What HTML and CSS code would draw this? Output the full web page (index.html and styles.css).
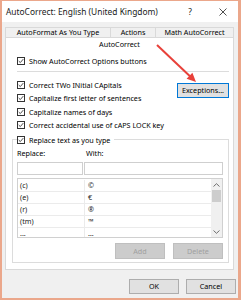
FILE: index.html
```html
<!DOCTYPE html>
<html>
<head>
<meta charset="utf-8">
<link rel="stylesheet" href="styles.css">
</head>
<body>
<div class="window">
  <div class="titlebar">
    <span class="title">AutoCorrect: English (United Kingdom)</span>
    <span class="help">?</span>
    <svg class="close" width="8" height="8" viewBox="0 0 8 8"><path d="M0.5 0.5L7.5 7.5M7.5 0.5L0.5 7.5" stroke="#222" stroke-width="0.8" fill="none"/></svg>
  </div>
  <div class="main">
    <div class="tabs">
      <div class="tab t1">AutoFormat As You Type</div>
      <div class="tab t2">Actions</div>
      <div class="tab t3">Math AutoCorrect</div>
    </div>
    <div class="panel">
      <div class="tab-active">AutoCorrect</div>
      <div class="check show-row"><span class="box"><svg width="6" height="6" viewBox="0 0 6 6"><path d="M0.7 3L2.3 4.6L5.3 1.1" stroke="#222" stroke-width="0.8" fill="none"/></svg></span>Show AutoCorrect Options buttons</div>
      <div class="sep"></div>
      <div class="opts">
        <div class="opt-list">
          <div class="check"><span class="box"><svg width="6" height="6" viewBox="0 0 6 6"><path d="M0.7 3L2.3 4.6L5.3 1.1" stroke="#222" stroke-width="0.8" fill="none"/></svg></span>Correct TWo INitial CApitals</div>
          <div class="check"><span class="box"><svg width="6" height="6" viewBox="0 0 6 6"><path d="M0.7 3L2.3 4.6L5.3 1.1" stroke="#222" stroke-width="0.8" fill="none"/></svg></span>Capitalize first letter of sentences</div>
          <div class="check"><span class="box"><svg width="6" height="6" viewBox="0 0 6 6"><path d="M0.7 3L2.3 4.6L5.3 1.1" stroke="#222" stroke-width="0.8" fill="none"/></svg></span>Capitalize names of days</div>
          <div class="check"><span class="box"><svg width="6" height="6" viewBox="0 0 6 6"><path d="M0.7 3L2.3 4.6L5.3 1.1" stroke="#222" stroke-width="0.8" fill="none"/></svg></span>Correct accidental use of cAPS LOCK key</div>
        </div>
        <button class="btn exceptions">Exceptions...</button>
      </div>
      <div class="group">
        <div class="check legend"><span class="box"><svg width="6" height="6" viewBox="0 0 6 6"><path d="M0.7 3L2.3 4.6L5.3 1.1" stroke="#222" stroke-width="0.8" fill="none"/></svg></span>Replace text as you type</div>
        <div class="labels"><span class="lbl-r">Replace:</span><span>With:</span></div>
        <div class="inputs"><div class="input in-r"></div><div class="input in-w"></div></div>
        <div class="list">
          <div class="rows">
            <div class="row"><span class="c1">(c)</span><span class="c2">©</span></div>
            <div class="row"><span class="c1">(e)</span><span class="c2">€</span></div>
            <div class="row"><span class="c1">(r)</span><span class="c2">®</span></div>
            <div class="row"><span class="c1">(tm)</span><span class="c2">™</span></div>
            <div class="row"><span class="c1">...</span><span class="c2">…</span></div>
          </div>
          <div class="scrollbar">
            <div class="sb-arrow"><svg width="7" height="4" viewBox="0 0 7 4"><path d="M0.5 3.5L3.5 0.7L6.5 3.5" stroke="#606060" stroke-width="0.9" fill="none"/></svg></div>
            <div class="thumb"></div>
            <div class="sb-space"></div>
            <div class="sb-arrow"><svg width="7" height="4" viewBox="0 0 7 4"><path d="M0.5 0.5L3.5 3.3L6.5 0.5" stroke="#606060" stroke-width="0.9" fill="none"/></svg></div>
          </div>
        </div>
        <div class="actions">
          <button class="btn disabled" disabled>Add</button>
          <button class="btn disabled" disabled>Delete</button>
        </div>
      </div>
    </div>
    <div class="footer">
      <button class="btn">OK</button>
      <button class="btn">Cancel</button>
    </div>
  </div>
  <svg class="arrow" width="241" height="300" viewBox="0 0 241 300">
    <path d="M157 45L190.5 76.8" stroke="#e8413a" stroke-width="2" fill="none"/>
    <polygon points="196,82 186.6,78.8 192.4,72.7" fill="#e8413a"/>
  </svg>
</div>
</body>
</html>
```
FILE: styles.css
```css
* { box-sizing: border-box; }
html, body { margin: 0; padding: 0; }
body {
  width: 241px;
  height: 300px;
  overflow: hidden;
  font-family: "Noto Sans", "DejaVu Sans", sans-serif;
  font-size: 7.2px;
  color: #000;
  background: #fff;
}
.window {
  position: relative;
  width: 241px;
  height: 300px;
  border: 2px solid #eba78b;
  border-top-width: 1px;
  border-right-width: 3px;
  background: #f0f0f0;
  display: flex;
  flex-direction: column;
}
.titlebar {
  height: 21px;
  flex: none;
  background: #fff;
  display: flex;
  align-items: center;
  padding: 0 11px 0 4px;
  font-size: 8.4px;
  color: #1a1a1a;
}
.title { flex: 1; }
.help { width: 8px; text-align: center; }
.close { margin-left: 25px; }
.main {
  flex: 1;
  padding: 5px 3px 0 3px;
  display: flex;
  flex-direction: column;
}
.tabs {
  display: flex;
  height: 10px;
  margin-right: 1px;
}
.tab {
  border: 1px solid #d9d9d9;
  border-bottom: none;
  line-height: 9px;
  text-align: center;
  white-space: nowrap;
}
.t1 { width: 106px; }
.t2 { width: 46px; margin-left: -1px; }
.t3 { width: 79px; margin-left: -1px; }
.panel {
  height: 233px;
  margin-right: 1px;
  background: #fff;
  border: 1px solid #d9d9d9;
  padding: 0 4px 0 11px;
  display: flex;
  flex-direction: column;
}
.tab-active {
  height: 12px;
  line-height: 12px;
  text-align: center;
  margin: 0 -4px 0 -11px;
}
.check {
  display: flex;
  align-items: center;
  height: 13.5px;
  gap: 4px;
  white-space: nowrap;
}
.box {
  width: 8px;
  height: 8px;
  border: 1px solid #333;
  background: #fff;
  display: flex;
  flex: none;
}
.show-row { margin-top: 4.25px; }
.sep {
  height: 1px;
  background: #dcdcdc;
  margin: 3.25px 0 5.75px;
}
.opts { display: flex; }
.opt-list { display: flex; flex-direction: column; }
.btn {
  font: inherit;
  color: #000;
  padding: 0;
  background: #e1e1e1;
  border: 1px solid #adadad;
  width: 50px;
  height: 15px;
  line-height: 13px;
}
.exceptions {
  margin-left: auto;
  margin-top: 5.25px;
  width: 52px;
  border-color: #0078d7;
}
.group {
  margin: 7.25px 0 0 -5px;
  border: 1px solid #dcdcdc;
  padding: 0 5px 3px 4px;
  display: flex;
  flex-direction: column;
}
.legend {
  margin-top: -7.25px;
  background: #fff;
  width: fit-content;
  padding-right: 4px;
}
.labels {
  display: flex;
  height: 11px;
  line-height: 11px;
  margin-top: 2px;
}
.lbl-r { width: 69px; }
.inputs {
  display: flex;
  height: 13px;
  margin-top: 2.75px;
}
.input {
  border: 1px solid #cfcfcf;
  background: #fff;
}
.in-r { width: 66px; }
.in-w { flex: 1; margin-left: 1px; }
.list {
  margin-top: 3px;
  height: 60px;
  border: 1px solid #d0d0d0;
  display: flex;
  overflow: hidden;
}
.rows {
  flex: 1;
  padding-top: 1px;
  display: flex;
  flex-direction: column;
}
.row {
  height: 12px;
  flex: none;
  display: flex;
  border-bottom: 1px solid #ebebeb;
  line-height: 11px;
  color: #222;
}
.c1 {
  width: 67px;
  padding-left: 2px;
  border-right: 1px solid #ebebeb;
}
.c2 { padding-left: 3px; }
.scrollbar {
  width: 11px;
  background: #f0f0f0;
  display: flex;
  flex-direction: column;
}
.sb-arrow {
  height: 11px;
  display: flex;
  align-items: center;
  justify-content: center;
}
.thumb {
  height: 12px;
  margin: 0 1px;
  background: #cdcdcd;
}
.sb-space { flex: 1; }
.actions {
  display: flex;
  justify-content: flex-end;
  gap: 8px;
  margin-top: 5px;
}
.actions .btn { height: 16px; line-height: 14px; }
.btn.disabled {
  background: #cccccc;
  border-color: #bfbfbf;
  color: #a0a0a0;
}
.footer {
  display: flex;
  justify-content: flex-end;
  gap: 7px;
  margin: 9px -1px 0 0;
}
.arrow {
  position: absolute;
  left: -2px;
  top: -1px;
  pointer-events: none;
}
```
